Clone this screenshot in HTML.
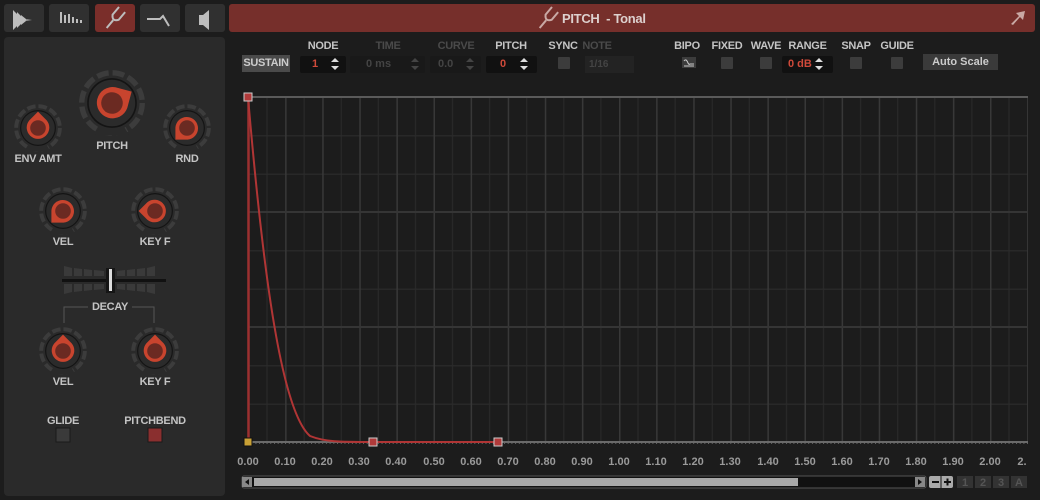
<!DOCTYPE html>
<html><head><meta charset="utf-8"><style>
*{margin:0;padding:0;box-sizing:border-box}
body{width:1040px;height:500px;background:#1c1c1c;overflow:hidden;position:relative;font-family:"Liberation Sans",sans-serif;font-weight:bold;color:#bdbdbd}
.a{position:absolute}
.tab{position:absolute;top:4px;height:28px;width:40px;background:#303030;border-radius:3px}
.lbl{position:absolute;font-size:11px;color:#c4c4c4;text-align:center;letter-spacing:-0.3px}
.dis{color:#4a4a4a}
.box{position:absolute;top:56px;height:17px;background:#111;border-radius:2px;font-size:11px;color:#d04a3a;padding-left:12px;line-height:17px}
.cb{position:absolute;top:57px;width:12px;height:12px;background:#3c3c3c;border-radius:1px}
</style></head><body>
<div class="tab" style="left:4px"></div>
<div class="tab" style="left:49px"></div>
<div class="tab" style="left:95px;background:#7a2e2a"></div>
<div class="tab" style="left:140px"></div>
<div class="tab" style="left:185px"></div>
<svg class="a" style="left:0;top:0" width="230" height="36">
<g fill="#bdbdbd" stroke="#bdbdbd">
<path d="M13,10 L13,30 L18,25 L18,15 Z M17,12 L17,28 L23,22 L23,18 Z M21,15 L21,25 L26,21 L26,19Z M24,19 L24,21 L32,20Z" stroke="none"/>
<path d="M61,12v11 M65,15v8 M69,14v9 M73,17v6 M77,19v4 M81,20v3" stroke-width="2" fill="none"/>
<g transform="rotate(40 115 18)" stroke-width="2" fill="none"><path d="M115,31 L115,21 M111,7 L111,17 Q115,23 119,17 L119,7"/></g>
<path d="M147,19 L160,19 L163,16 L169,26" stroke-width="2" fill="none"/>
<path d="M199,15 L203,15 L209,10 L209,30 L203,25 L199,25Z" stroke="none"/>
</g></svg>
<div class="a" style="left:229px;top:4px;width:806px;height:28px;background:#762f2b;border-radius:3px"></div>
<svg class="a" style="left:533px;top:4px" width="30" height="28"><g transform="rotate(40 15 14)" stroke="#c9a9a5" stroke-width="2" fill="none"><path d="M15,27 L15,17 M11,3 L11,13 Q15,19 19,13 L19,3"/></g></svg>
<div class="a" style="left:562px;top:11px;font-size:13px;color:#ddd0ce;letter-spacing:-0.3px">PITCH &nbsp;- Tonal</div>
<svg class="a" style="left:1008px;top:8px" width="20" height="20"><path d="M3,16 L11,8 L8,5 L17,3 L15,12 L12,9 L5,17Z" fill="#c9a9a5"/></svg>

<div class="a" style="left:4px;top:37px;width:221px;height:459px;background:#2a2a2a;border-radius:4px"></div>

<svg class="a" style="left:0;top:0" width="230" height="500">
<defs>
<g id="ring"><circle r="28" fill="none" stroke="#3c3c3c" stroke-width="5" stroke-dasharray="11 3.7"/><path d="M-16,30 L16,30 L0,4Z" fill="#2a2a2a"/><circle r="23" fill="#141414"/><circle r="21.5" fill="#2b2b2b"/></g>
<g id="ptr"><path d="M0,-21 L11,-10 A14.5,14.5 0 1 1 -11,-10 Z" fill="#c8442e"/><circle r="10" fill="#6b2a22"/></g>
</defs>
<g transform="translate(112,103) scale(1.08)"><use href="#ring"/><use href="#ptr" transform="rotate(60)"/></g>
<g transform="translate(38,128) scale(0.78)"><use href="#ring"/><use href="#ptr"/></g>
<g transform="translate(187,128) scale(0.78)"><use href="#ring"/><use href="#ptr" transform="rotate(225)"/></g>
<g transform="translate(63,211) scale(0.78)"><use href="#ring"/><use href="#ptr" transform="rotate(225)"/></g>
<g transform="translate(155,211) scale(0.78)"><use href="#ring"/><use href="#ptr" transform="rotate(270)"/></g>
<g transform="translate(63,351) scale(0.78)"><use href="#ring"/><use href="#ptr"/></g>
<g transform="translate(155,351) scale(0.78)"><use href="#ring"/><use href="#ptr"/></g>
<g fill="#3a3a3a">
<path d="M64,266 L72,268 L72,276 L64,276Z M74,268 L82,269 L82,276 L74,276Z M84,269 L92,270 L92,276 L84,276Z M94,270 L104,271 L104,276 L94,276Z"/>
<path d="M64,284 L72,284 L72,292 L64,294Z M74,284 L82,284 L82,291 L74,292Z M84,284 L92,284 L92,290 L84,291Z M94,284 L104,284 L104,289 L94,290Z"/>
<path d="M155,266 L147,268 L147,276 L155,276Z M145,268 L137,269 L137,276 L145,276Z M135,269 L127,270 L127,276 L135,276Z M125,270 L117,271 L117,276 L125,276Z"/>
<path d="M155,284 L147,284 L147,292 L155,294Z M145,284 L137,284 L137,291 L145,292Z M135,284 L127,284 L127,290 L135,291Z M125,284 L117,284 L117,289 L125,290Z"/>
</g>
<rect x="62" y="279" width="104" height="3" fill="#111"/>
<rect x="106" y="268" width="9" height="25" fill="#151515"/><rect x="109" y="269" width="3" height="22" fill="#ddd"/>
<path d="M64,323 V307 H88 M132,307 H154 V323" stroke="#555" fill="none"/>
<rect x="56" y="428" width="14" height="14" fill="#3a3a3a" stroke="#1a1a1a"/>
<rect x="148" y="428" width="14" height="14" fill="#8a2f2f" stroke="#1a1a1a"/>
</svg>
<div class="lbl" style="left:8px;top:153px;width:60px">ENV AMT</div>
<div class="lbl" style="left:82px;top:140px;width:60px">PITCH</div>
<div class="lbl" style="left:157px;top:153px;width:60px">RND</div>
<div class="lbl" style="left:33px;top:236px;width:60px">VEL</div>
<div class="lbl" style="left:125px;top:236px;width:60px">KEY F</div>
<div class="lbl" style="left:80px;top:301px;width:60px">DECAY</div>
<div class="lbl" style="left:33px;top:376px;width:60px">VEL</div>
<div class="lbl" style="left:125px;top:376px;width:60px">KEY F</div>
<div class="lbl" style="left:33px;top:415px;width:60px">GLIDE</div>
<div class="lbl" style="left:115px;top:415px;width:80px">PITCHBEND</div>

<div class="a" style="left:242px;top:55px;width:48px;height:17px;background:#4a4a4a;font-size:11px;color:#ccc;text-align:center;line-height:17px;letter-spacing:-0.3px">SUSTAIN</div>
<div class="lbl" style="left:300px;top:40px;width:46px">NODE</div>
<div class="lbl dis" style="left:358px;top:40px;width:60px">TIME</div>
<div class="lbl dis" style="left:430px;top:40px;width:52px">CURVE</div>
<div class="lbl" style="left:486px;top:40px;width:50px">PITCH</div>
<div class="lbl" style="left:548px;top:40px;width:30px">SYNC</div>
<div class="lbl dis" style="left:582px;top:40px;width:30px">NOTE</div>
<div class="box" style="left:300px;width:46px">1</div>
<div class="box" style="left:350px;width:75px;background:#191919;color:#444;padding-left:16px">0 ms</div>
<div class="box" style="left:430px;width:51px;background:#191919;color:#444;padding-left:8px">0.0</div>
<div class="box" style="left:486px;width:51px;padding-left:14px">0</div>
<div class="box" style="left:782px;width:51px;padding-left:6px">0 dB</div>
<svg class="a" style="left:0;top:56px" width="1040" height="18"><g fill="#ddd"><path d="M331,6 l4,-4 4,4z M331,10 l4,4 4,-4z M520,6 l4,-4 4,4z M520,10 l4,4 4,-4z M815,6 l4,-4 4,4z M815,10 l4,4 4,-4z"/></g><g fill="#444"><path d="M411,6 l4,-4 4,4z M411,10 l4,4 4,-4z M466,6 l4,-4 4,4z M466,10 l4,4 4,-4z M619,6 l5,5 5,-5z"/></g></svg>
<div class="a" style="left:585px;top:56px;width:49px;height:17px;background:#232323;font-size:10px;color:#444;padding-left:4px;line-height:17px">1/16</div>
<div class="cb" style="left:558px"></div>
<div class="lbl" style="left:672px;top:40px;width:30px">BIPO</div>
<div class="lbl" style="left:707px;top:40px;width:40px">FIXED</div>
<div class="lbl" style="left:746px;top:40px;width:40px">WAVE</div>
<div class="lbl" style="left:785px;top:40px;width:45px">RANGE</div>
<div class="lbl" style="left:836px;top:40px;width:40px">SNAP</div>
<div class="lbl" style="left:877px;top:40px;width:40px">GUIDE</div>
<div class="a" style="left:682px;top:57px;width:14px;height:11px;background:#3c3c3c"></div>
<svg class="a" style="left:682px;top:57px" width="14" height="11"><path d="M2,4 Q4,1 6,6 Q7,8 8,7 L12,7" stroke="#ccc" fill="none"/><path d="M2,9H12" stroke="#ccc"/></svg>
<div class="cb" style="left:721px"></div>
<div class="cb" style="left:760px"></div>
<div class="cb" style="left:850px"></div>
<div class="cb" style="left:891px"></div>
<div class="a" style="left:923px;top:54px;width:75px;height:16px;background:#3a3a3a;font-size:11px;color:#ccc;text-align:center;line-height:16px">Auto Scale</div>

<svg class="a" style="left:0;top:0" width="1040" height="500">
<defs>
<pattern id="pv" x="248" y="0" width="37.1" height="500" patternUnits="userSpaceOnUse"><rect x="0" width="1.5" height="500" fill="#383838"/><rect x="18.5" width="1" height="500" fill="#2b2b2b"/></pattern>
<pattern id="ph" x="0" y="97" width="1040" height="38.33" patternUnits="userSpaceOnUse"><rect y="0" width="1040" height="1" fill="#2e2e2e"/></pattern>
<pattern id="tk" x="248" y="0" width="3.71" height="10" patternUnits="userSpaceOnUse"><rect width="1" height="4" fill="#666"/></pattern>
</defs>
<rect x="248" y="97" width="780" height="345" fill="url(#ph)"/>
<rect x="248" y="97" width="780" height="345" fill="url(#pv)"/>
<rect x="248" y="211" width="780" height="2" fill="#353535"/>
<rect x="248" y="326" width="780" height="2" fill="#353535"/>
<rect x="248" y="96" width="780" height="2" fill="#5a5a5a"/>
<rect x="248" y="441" width="780" height="2" fill="#6a6a6a"/>
<rect x="252" y="443" width="776" height="4" fill="url(#tk)"/>
<line x1="248.5" y1="97" x2="248.5" y2="441" stroke="#9c3030" stroke-width="2.5"/>
<path d="M248,97 C262,260 280,410 310,436 C325,442 340,442 373,442 L498,442" stroke="#b03535" stroke-width="2" fill="none"/>
<rect x="244" y="93" width="8" height="8" fill="#b03a3a" stroke="#ccc"/>
<rect x="369" y="438" width="8" height="8" fill="#b03a3a" stroke="#ccc"/>
<rect x="494" y="438" width="8" height="8" fill="#b03a3a" stroke="#ccc"/>
<rect x="244" y="438" width="8" height="8" fill="#c8a035" stroke="#111"/>
<rect x="242" y="476" width="684" height="12" fill="#111" stroke="#555" rx="2"/>
<rect x="254" y="478" width="544" height="8" fill="#a8a8a8"/>
<rect x="242" y="477" width="10" height="10" fill="#888"/><path d="M249,479 L245,482 L249,485Z" fill="#111"/>
<rect x="915" y="477" width="10" height="10" fill="#888"/><path d="M918,479 L922,482 L918,485Z" fill="#111"/>
<rect x="929" y="476" width="24" height="12" fill="#aaa" rx="2"/><path d="M932,482h7 M944,482h7 M947.5,478.5v7" stroke="#111" stroke-width="2"/><line x1="941" y1="476" x2="941" y2="488" stroke="#111"/>
<g fill="#333"><rect x="957" y="476" width="16" height="12"/><rect x="975" y="476" width="16" height="12"/><rect x="993" y="476" width="16" height="12"/><rect x="1011" y="476" width="16" height="12"/></g>
<g fill="#555" font-size="11" font-family="Liberation Sans" font-weight="bold" text-anchor="middle"><text x="965" y="486">1</text><text x="983" y="486">2</text><text x="1001" y="486">3</text><text x="1019" y="486">A</text></g>
<g fill="#9a9a9a" font-size="11" font-family="Liberation Sans" font-weight="bold" text-anchor="middle">
<text x="248" y="465">0.00</text><text x="285" y="465">0.10</text><text x="322" y="465">0.20</text><text x="359" y="465">0.30</text><text x="396" y="465">0.40</text><text x="434" y="465">0.50</text><text x="471" y="465">0.60</text><text x="508" y="465">0.70</text><text x="545" y="465">0.80</text><text x="582" y="465">0.90</text><text x="619" y="465">1.00</text><text x="656" y="465">1.10</text><text x="693" y="465">1.20</text><text x="730" y="465">1.30</text><text x="768" y="465">1.40</text><text x="805" y="465">1.50</text><text x="842" y="465">1.60</text><text x="879" y="465">1.70</text><text x="916" y="465">1.80</text><text x="953" y="465">1.90</text><text x="990" y="465">2.00</text><text x="1022" y="465">2.</text>
</g>
</svg>
</body></html>
